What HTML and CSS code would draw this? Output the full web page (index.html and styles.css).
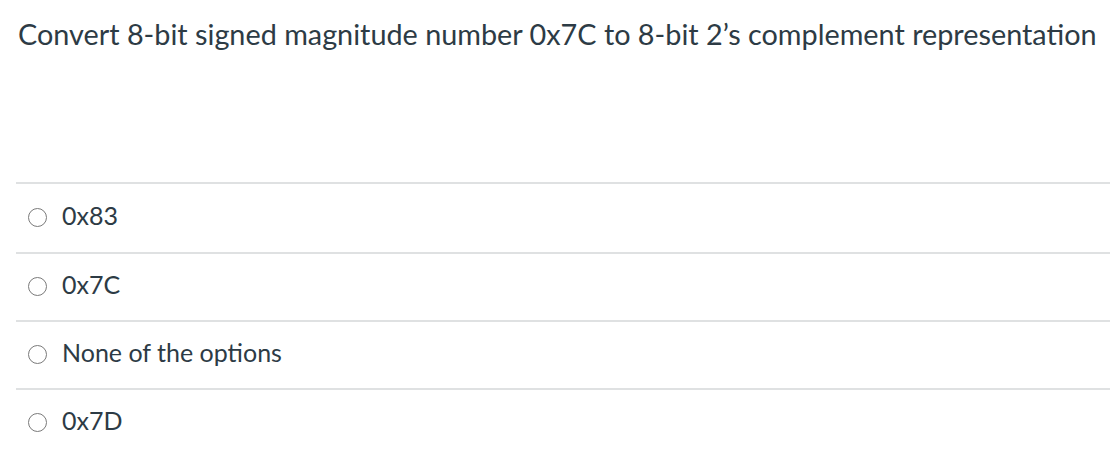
FILE: index.html
```html
<!DOCTYPE html>
<html>
<head>
<meta charset="utf-8">
<link rel="stylesheet" href="styles.css">
</head>
<body>
<div class="question">
  <div class="question-text">Convert 8-bit signed magnitude number 0x7C to 8-bit 2’s complement representation</div>
  <div class="answers">
    <label class="answer first"><span class="radio"></span><span class="label">0x83</span></label>
    <label class="answer"><span class="radio"></span><span class="label">0x7C</span></label>
    <label class="answer"><span class="radio"></span><span class="label">None of the options</span></label>
    <label class="answer"><span class="radio"></span><span class="label">0x7D</span></label>
  </div>
</div>
</body>
</html>
```

FILE: styles.css
```css
html, body {
  margin: 0;
  padding: 0;
  background: #ffffff;
}
body {
  font-family: Lato, "Open Sans", "Liberation Sans", sans-serif;
  color: #2d3b45;
  width: 1110px;
  height: 470px;
  overflow: hidden;
}
.question {
  padding-left: 16px;
}
.question-text {
  font-size: 28.8px;
  line-height: 36px;
  padding-top: 16px;
  padding-left: 2px;
  height: 182px;
  box-sizing: border-box;
  white-space: nowrap;
}
.answers {
  display: flex;
  flex-direction: column;
}
.answer {
  display: flex;
  align-items: center;
  gap: 15px;
  height: 60px;
  padding-bottom: 6px;
  box-sizing: content-box;
  border-top: 2px solid #dfe1e2;
  padding-left: 12px;
  font-size: 25px;
}
.answer.first {
  height: 62px;
}
.radio {
  width: 19px;
  height: 19px;
  margin-top: 4px;
  border: 1.5px solid #7a7a7a;
  border-radius: 50%;
  box-sizing: border-box;
  flex: none;
}
.label {
  line-height: 30px;
}
```
